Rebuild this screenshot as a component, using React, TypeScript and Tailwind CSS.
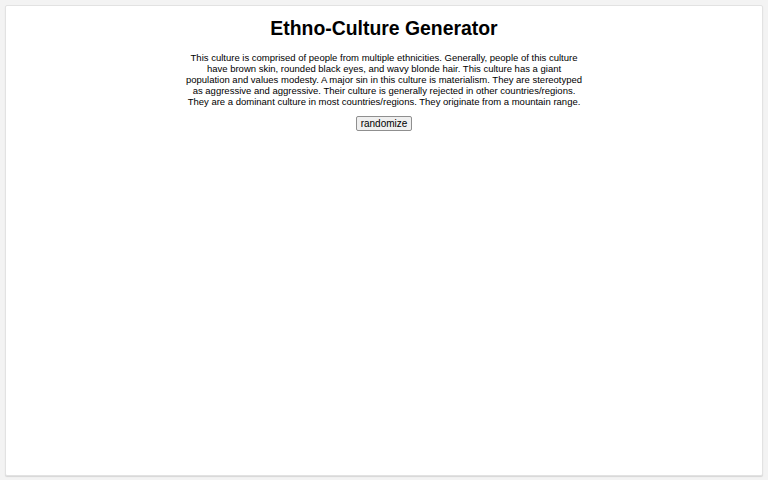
import { useState } from 'react'

// Generated description, kept as lines so the wrapping stays put
const description = [
  'This culture is comprised of people from multiple ethnicities. Generally, people of this culture',
  'have brown skin, rounded black eyes, and wavy blonde hair. This culture has a giant',
  'population and values modesty. A major sin in this culture is materialism. They are stereotyped',
  'as aggressive and aggressive. Their culture is generally rejected in other countries/regions.',
  'They are a dominant culture in most countries/regions. They originate from a mountain range.',
]

export default function App() {
  const [lines, setLines] = useState(description)

  return (
    <div className="h-[480px] w-full bg-[#f3f3f3] p-[5px] font-['Liberation_Sans',Arial,sans-serif] text-black">
      <div className="flex h-[471px] flex-col items-center rounded-[2px] border border-[#e2e2e2] bg-white shadow-[0_1px_1px_rgba(0,0,0,0.12)]">
        <h1 className="mt-[10px] text-[19.4px] font-bold leading-[24px]">
          Ethno-Culture Generator
        </h1>
        <p className="mt-[12px] flex flex-col items-center whitespace-nowrap text-center text-[9.5px] leading-[11px]">
          {lines.map(line => (
            <span key={line}>{line}</span>
          ))}
        </p>
        <button
          onClick={() => setLines(description)}
          className="mt-[9px] h-[15px] rounded-[2px] border border-[#8f8f8f] bg-[#efefef] px-[4px] text-[10px] leading-[13px]"
        >
          randomize
        </button>
      </div>
    </div>
  )
}
